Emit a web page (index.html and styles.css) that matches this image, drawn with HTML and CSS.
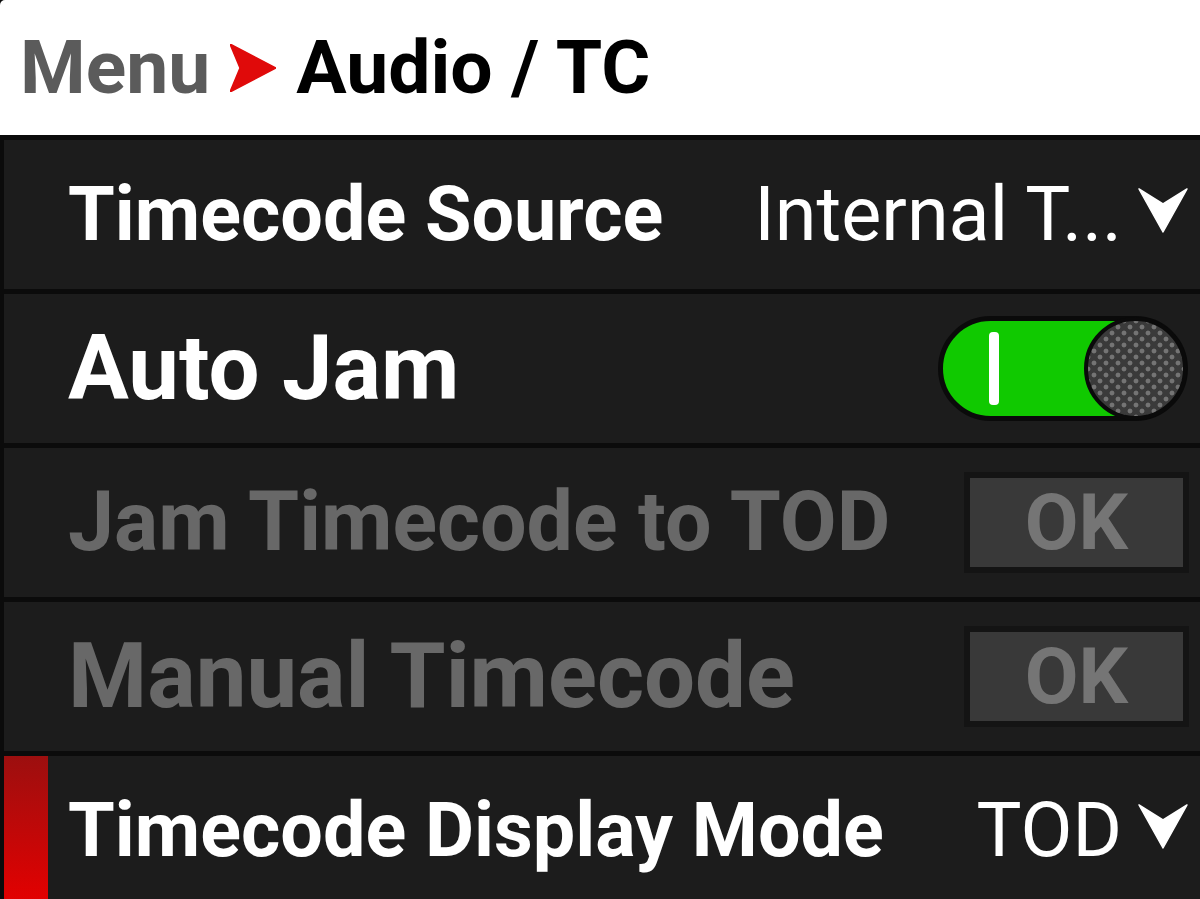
FILE: index.html
```html
<!DOCTYPE html>
<html lang="en">
<head>
<meta charset="utf-8">
<title>Menu - Audio / TC</title>
<link rel="stylesheet" href="styles.css">
</head>
<body>
<div class="screen">
  <header class="header">
    <span class="crumb-parent">Menu</span>
    <svg class="crumb-arrow" viewBox="0 0 46 48" width="46" height="48" aria-hidden="true">
      <polygon points="0,0 46,24 0,48 10,24" fill="#e00a0a" stroke="#e00a0a" stroke-width="1.5" stroke-linejoin="round"/>
    </svg>
    <span class="crumb-current">Audio / TC</span>
  </header>
  <div class="list">
    <div class="row">
      <div class="marker"></div>
      <span class="label size-a">Timecode Source</span>
      <div class="value">
        <span class="value-text">Internal T...</span>
        <svg class="chevron" viewBox="0 0 50 45" width="50" height="45" aria-hidden="true">
          <polygon points="1,1 25,16 49,1 25,44" fill="#fff" stroke="#fff" stroke-width="1.5" stroke-linejoin="round"/>
        </svg>
      </div>
    </div>
    <div class="row">
      <div class="marker"></div>
      <span class="label size-b">Auto Jam</span>
      <div class="toggle">
        <div class="toggle-bar"></div>
        <div class="toggle-knob"></div>
      </div>
    </div>
    <div class="row">
      <div class="marker"></div>
      <span class="label size-c disabled">Jam Timecode to TOD</span>
      <div class="ok-btn"><span>OK</span></div>
    </div>
    <div class="row">
      <div class="marker"></div>
      <span class="label size-d disabled">Manual Timecode</span>
      <div class="ok-btn"><span>OK</span></div>
    </div>
    <div class="row selected">
      <div class="marker"></div>
      <span class="label size-a">Timecode Display Mode</span>
      <div class="value">
        <span class="value-text">TOD</span>
        <svg class="chevron" viewBox="0 0 50 45" width="50" height="45" aria-hidden="true">
          <polygon points="1,1 25,16 49,1 25,44" fill="#fff" stroke="#fff" stroke-width="1.5" stroke-linejoin="round"/>
        </svg>
      </div>
    </div>
  </div>
</div>
</body>
</html>
```
FILE: styles.css
```css
html, body {
  margin: 0;
  padding: 0;
  background: #0b0b0b;
}
body {
  width: 1200px;
  height: 899px;
  overflow: hidden;
  font-family: Roboto, "Liberation Sans", Arial, sans-serif;
}
.screen {
  width: 1200px;
  height: 899px;
  overflow: hidden;
  background: #0b0b0b;
}
.header {
  height: 135px;
  background: #ffffff;
  border-top-left-radius: 5px;
  display: flex;
  align-items: center;
  padding-left: 20px;
  box-sizing: border-box;
  font-weight: 700;
  font-size: 75px;
  line-height: 1;
}
.crumb-parent {
  color: #5b5b5b;
}
.crumb-arrow {
  margin: 0 20px 0 20px;
}
.crumb-current {
  color: #000;
}
.list {
  display: flex;
  flex-direction: column;
  gap: 5px;
  padding: 5px 0 0 4px;
}
.row {
  height: 149px;
  background: #1c1c1c;
  display: flex;
  align-items: center;
  padding-right: 12px;
  flex-shrink: 0;
}
.marker {
  width: 44px;
  align-self: stretch;
  flex-shrink: 0;
}
.selected .marker {
  background: linear-gradient(to bottom, #9c0f0f 0%, #c00808 50%, #e50000 100%);
}
.label {
  margin-left: 20px;
  color: #ffffff;
  font-weight: 700;
  line-height: 1;
  white-space: nowrap;
  flex: 1;
}
.size-a { font-size: 75.5px; }
.size-b { font-size: 90.5px; }
.size-c { font-size: 82.5px; }
.size-d { font-size: 90.5px; }
.disabled {
  color: #686868;
}
.value {
  display: flex;
  align-items: center;
  gap: 16px;
}
.value-text {
  color: #fff;
  font-size: 75.5px;
  font-weight: 400;
  line-height: 1;
}
.chevron {
  margin-top: -8px;
}
.toggle {
  width: 250px;
  height: 105px;
  box-sizing: border-box;
  border: 5px solid #0a0a0a;
  border-radius: 53px;
  background: #10c900;
  display: flex;
  align-items: center;
}
.toggle-bar {
  width: 10px;
  height: 73px;
  border-radius: 4px;
  background: #fff;
  margin-left: 46px;
}
.toggle-knob {
  margin-left: auto;
  width: 103px;
  height: 103px;
  margin-right: -4px;
  box-sizing: border-box;
  border-radius: 50%;
  border: 4px solid #0a0a0a;
  background-color: #3a3a3a;
  background-image:
    radial-gradient(circle, #747474 2px, transparent 2.8px),
    radial-gradient(circle, #747474 2px, transparent 2.8px);
  background-size: 12px 12px;
  background-position: 0 0, 6px 6px;
}
.ok-btn {
  width: 225px;
  height: 101px;
  box-sizing: border-box;
  border: 6px solid #141414;
  background: #393939;
  display: flex;
  align-items: center;
  justify-content: center;
  margin-right: -1px;
}
.ok-btn span {
  color: #757575;
  font-size: 78px;
  font-weight: 700;
  line-height: 1;
}
```
